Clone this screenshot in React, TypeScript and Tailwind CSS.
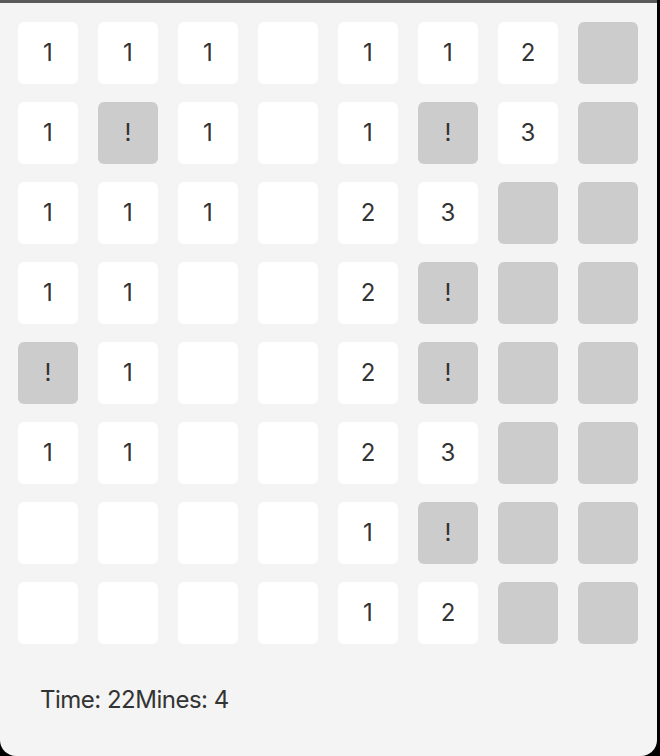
import React from "react";

type Cell = string;

// "C" = covered, "" = open empty, "!" = flagged, digits = open number
const board: Cell[][] = [
  ["1", "1", "1", "", "1", "1", "2", "C"],
  ["1", "!", "1", "", "1", "!", "3", "C"],
  ["1", "1", "1", "", "2", "3", "C", "C"],
  ["1", "1", "", "", "2", "!", "C", "C"],
  ["!", "1", "", "", "2", "!", "C", "C"],
  ["1", "1", "", "", "2", "3", "C", "C"],
  ["", "", "", "", "1", "!", "C", "C"],
  ["", "", "", "", "1", "2", "C", "C"],
];

const Tile = ({ value }: { value: Cell }) => {
  const covered = value === "C" || value === "!";
  return (
    <div
      className={`w-[60px] h-[62px] rounded-md flex items-center justify-center text-[24px] text-[#333] ${
        covered ? "bg-[#cccccc]" : "bg-white"
      }`}
    >
      {value === "C" ? "" : value}
    </div>
  );
};

const App = () => {
  return (
    <div className="w-[660px] h-[756px] bg-black" style={{ fontFamily: "Inter, 'Noto Sans', sans-serif" }}>
      <div className="w-[657px] h-[756px] bg-[#f4f4f4] rounded-b-2xl border-t-[3px] border-[#5a5a5a] flex flex-col">
        <div className="grid grid-cols-[repeat(8,60px)] gap-x-5 gap-y-[18px] pl-[18px] pt-[19px]">
          {board.map((row, r) =>
            row.map((v, c) => <Tile key={`${r}-${c}`} value={v} />)
          )}
        </div>
        <div className="flex pl-10 pt-[38px] text-[24px] text-[#333] tracking-[-0.5px]">
          <span>Time: 22</span>
          <span>Mines: 4</span>
        </div>
      </div>
    </div>
  );
};

export default App;
